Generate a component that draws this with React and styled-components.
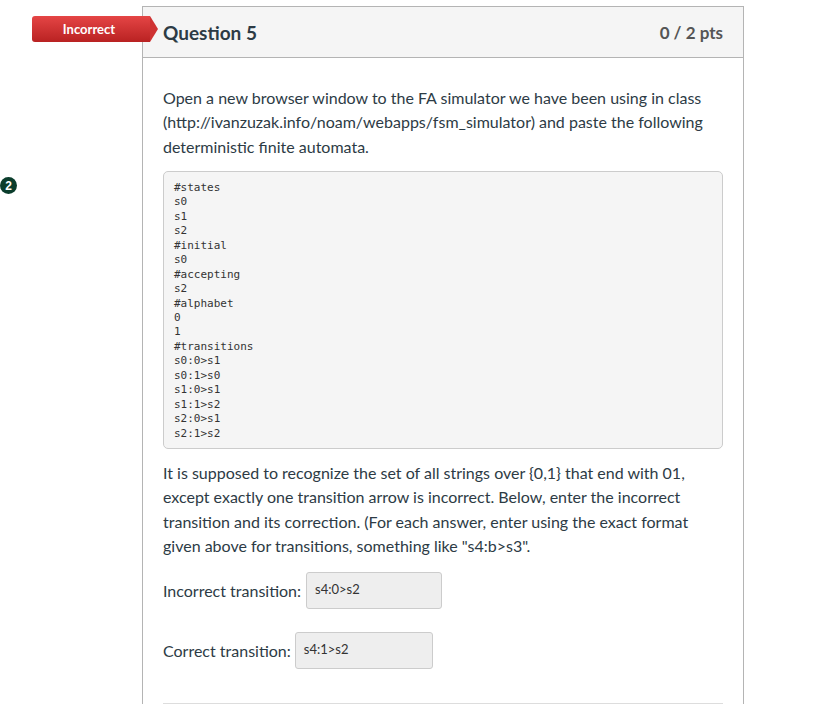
import React from "react";
import styled, { createGlobalStyle } from "styled-components";

const GlobalStyle = createGlobalStyle`
  body {
    margin: 0;
    background: #fff;
    font-family: Lato, "Open Sans", sans-serif;
    color: #2d3b45;
  }
`;

const Page = styled.div`
  position: relative;
  width: 828px;
  height: 704px;
  overflow: hidden;
  padding-top: 6px;
  box-sizing: border-box;
`;

const Card = styled.div`
  margin-left: 142px;
  width: 602px;
  border: 1px solid #b4b4b4;
  border-bottom: none;
  box-sizing: border-box;
  min-height: 720px;
`;

const Header = styled.div`
  display: flex;
  align-items: center;
  justify-content: space-between;
  height: 50px;
  padding: 0 20px;
  background: #f5f5f5;
  border-bottom: 1px solid #b4b4b4;
`;

const Title = styled.h2`
  margin: 0;
  font-size: 19px;
  font-weight: 700;
  color: #2d3b45;
`;

const Points = styled.span`
  font-size: 17px;
  font-weight: 700;
  color: #555;
  padding-top: 1px;
`;

const Body = styled.div`
  padding: 28px 20px 0;
`;

const Text = styled.p`
  margin: 0 0 ${(p) => p.$after}px;
  font-size: 16px;
  line-height: 24.3px;
`;

const Code = styled.pre`
  margin: 0 0 12px;
  padding: 9px 10px 7px;
  background: #f5f5f5;
  border: 1px solid #ccc;
  border-radius: 5px;
  font-family: "DejaVu Sans Mono", "Liberation Mono", monospace;
  font-size: 11px;
  line-height: 14.45px;
  color: #333;
`;

const AnswerRow = styled.div`
  display: flex;
  align-items: center;
  gap: ${(p) => p.$gap}px;
  margin-top: ${(p) => p.$top}px;
  font-size: 16px;
`;

const AnswerBox = styled.div`
  width: ${(p) => p.$width}px;
  height: 37px;
  box-sizing: border-box;
  padding: 8px 0 0 8px;
  background: #eee;
  border: 1px solid #ccc;
  border-radius: 3px;
  font-size: 13px;
  color: #333;
`;

const Divider = styled.hr`
  margin: 34px 0 0;
  border: none;
  border-top: 1px solid #ddd;
`;

const Flag = styled.div`
  position: absolute;
  left: 32px;
  top: 16px;
  width: 118px;
  height: 26px;
  display: flex;
  align-items: center;
  justify-content: center;
  padding-right: 4px;
  box-sizing: border-box;
  background: linear-gradient(#e54545, #b92222);
  border-radius: 3px 0 0 3px;
  color: #fff;
  font-size: 13px;
  font-weight: 700;
  &::after {
    content: "";
    position: absolute;
    right: -8px;
    top: 0;
    border-top: 13px solid transparent;
    border-bottom: 13px solid transparent;
    border-left: 8px solid #cf3333;
  }
`;

const Badge = styled.div`
  position: absolute;
  left: 0;
  top: 177px;
  width: 17px;
  height: 17px;
  border-radius: 50%;
  background: #0b3d2c;
  color: #fff;
  font-size: 12px;
  font-weight: 700;
  display: flex;
  align-items: center;
  justify-content: center;
  font-family: "Liberation Sans", Arial, sans-serif;
`;

const code = `#states
s0
s1
s2
#initial
s0
#accepting
s2
#alphabet
0
1
#transitions
s0:0>s1
s0:1>s0
s1:0>s1
s1:1>s2
s2:0>s1
s2:1>s2`;

const intro =
  "Open a new browser window to the FA simulator we have been using in class (http://ivanzuzak.info/noam/webapps/fsm_simulator) and paste the following deterministic finite automata.";

const task =
  'It is supposed to recognize the set of all strings over {0,1} that end with 01, except exactly one transition arrow is incorrect. Below, enter the incorrect transition and its correction. (For each answer, enter using the exact format given above for transitions, something like "s4:b>s3".';

export default function App() {
  return (
    <>
      <GlobalStyle />
      <Page>
        <Card>
          <Header>
            <Title>Question 5</Title>
            <Points>0 / 2 pts</Points>
          </Header>
          <Body>
            <Text $after={12}>{intro}</Text>
            <Code>{code}</Code>
            <Text $after={14}>{task}</Text>
            <AnswerRow $top={9} $gap={5}>
              Incorrect transition:
              <AnswerBox $width={136}>s4:0&gt;s2</AnswerBox>
            </AnswerRow>
            <AnswerRow $top={23} $gap={4}>
              Correct transition:
              <AnswerBox $width={138}>s4:1&gt;s2</AnswerBox>
            </AnswerRow>
            <Divider />
          </Body>
        </Card>
        <Flag>Incorrect</Flag>
        <Badge>2</Badge>
      </Page>
    </>
  );
}
